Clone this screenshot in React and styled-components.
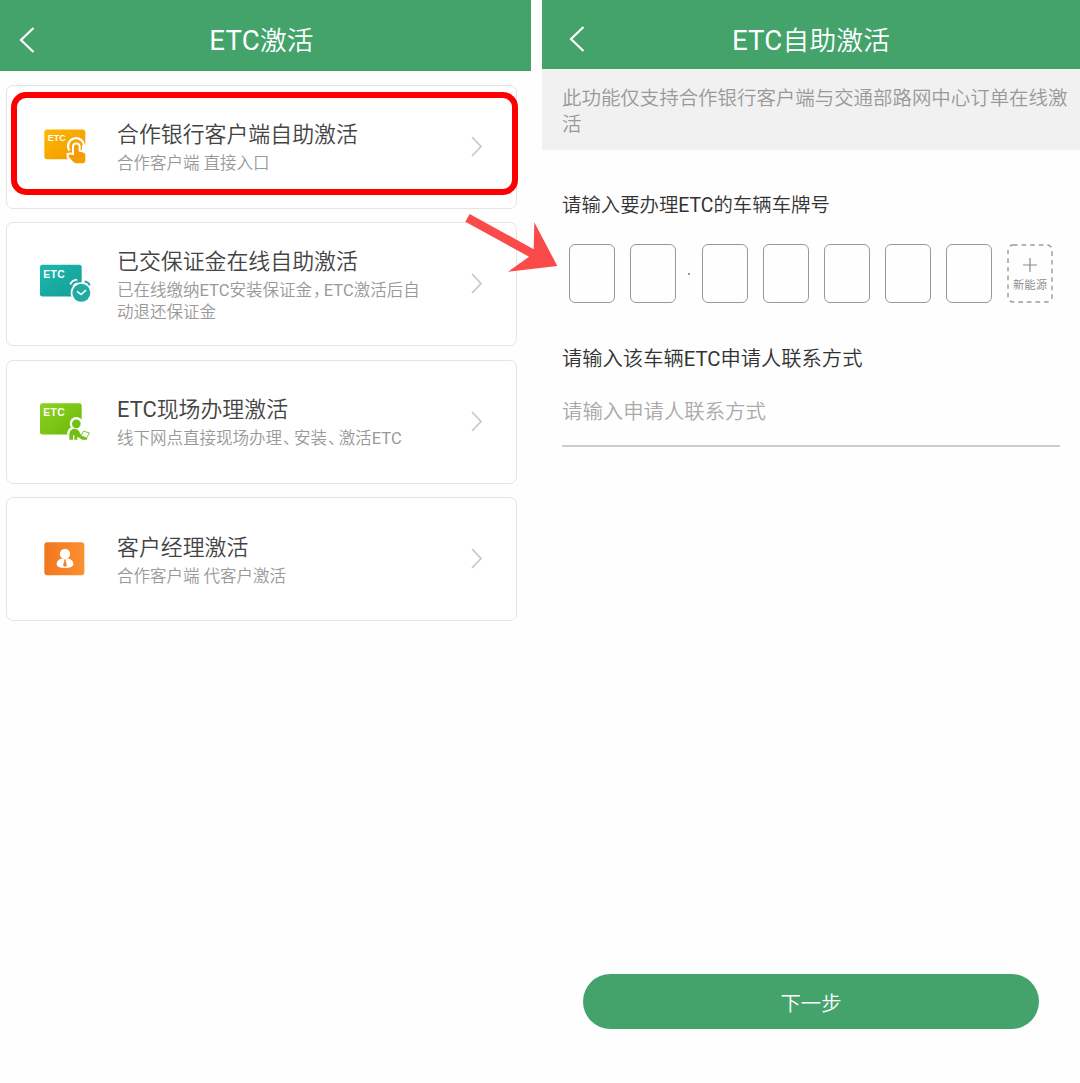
import React from 'react';
import styled, { createGlobalStyle } from 'styled-components';

const GlobalStyle = createGlobalStyle`
  * {
    box-sizing: border-box;
  }

  body {
    margin: 0;
    background: #fefefe;
    font-family: Roboto, 'Noto Sans CJK SC', sans-serif;
    font-weight: 350;
  }
`;

const Page = styled.main`
  position: relative;
  display: grid;
  grid-template-columns: 531px 538px;
  column-gap: 11px;
  width: 1080px;
  height: 1083px;
  overflow: hidden;
`;

const Screen = styled.section`
  display: flex;
  flex-direction: column;
`;

const Header = styled.header`
  display: grid;
  grid-template-columns: 60px 1fr 60px;
  align-items: center;
  height: ${props => props.$height}px;
  padding: 9px 26px 0 ${props => props.$inset}px;
  background: #43a36b;
  color: #fff;
`;

const BackButton = styled.button`
  display: flex;
  width: 20px;
  padding: 0;
  border: 0;
  background: none;
  color: #fff;
`;

const Title = styled.h1`
  margin: 3px 0 0;
  font-size: 26.7px;
  font-weight: 350;
  letter-spacing: 0.2px;
  line-height: 40px;
  text-align: center;
  white-space: nowrap;
`;

const Latin = styled.span`
  font-weight: 400;
`;

const TitleLatin = styled(Latin)`
  font-size: 27.6px;
`;

const CardList = styled.div`
  display: flex;
  flex-direction: column;
  gap: 13.6px;
  padding: 14px 14px 0 6px;
`;

const Card = styled.article`
  position: relative;
  display: flex;
  align-items: center;
  height: 124px;
  padding: 0 32px 0 28px;
  border: 1px solid #e4e4e4;
  border-radius: 7px;
  background: #fff;
`;

const CardText = styled.div`
  flex: 1;
  margin-left: 22px;
  padding-top: 2px;
`;

const CardTitle = styled.h2`
  margin: 0 0 3px;
  color: #444;
  font-size: 21.9px;
  font-weight: 350;
  line-height: 30px;
  white-space: nowrap;
`;

const CardNote = styled.p`
  margin: 0;
  color: #999;
  font-size: 16.5px;
  line-height: 21.5px;
  white-space: pre-line;
`;

// full-width punctuation set tighter than its em box
const Mark = styled.span`
  margin-left: 1px;
  letter-spacing: -5.6px;
`;

const Highlight = styled.div`
  position: absolute;
  top: 6px;
  right: -2px;
  left: 4px;
  height: 103px;
  border: 6px solid #fe0000;
  border-radius: 15px;
`;

const Arrow = styled.svg`
  position: absolute;
  top: 210px;
  left: 460px;
`;

const Notice = styled.p`
  height: 81px;
  margin: 0;
  padding: 17px 0 0 20px;
  background: #f1f1f1;
  color: #999;
  font-size: 19.45px;
  line-height: 26px;
`;

const Form = styled.form`
  display: flex;
  flex: 1;
  flex-direction: column;
  padding: 41px 20px 54px;
`;

const Label = styled.label`
  color: #333;
  font-size: ${props => props.$size}px;
  line-height: 30px;
  white-space: nowrap;
`;

const Plate = styled.div`
  display: flex;
  margin: 23px 0 41px 7px;
`;

const PlateGroup = styled.div`
  display: flex;
  gap: 15px;
`;

const PlateCell = styled.div`
  width: 46px;
  height: 59px;
  border: 1px solid #999;
  border-radius: 6px;
`;

const PlateDot = styled.span`
  display: flex;
  align-items: center;
  justify-content: center;
  width: 26px;

  &::after {
    width: 2px;
    height: 2px;
    background: #999;
    content: '';
  }
`;

const NewEnergy = styled.div`
  position: relative;
  display: flex;
  flex-direction: column;
  align-items: center;
  width: 46px;
  height: 59px;
  padding-top: 14px;
  color: #888;
  font-size: 11.3px;
  line-height: 16px;
  white-space: nowrap;

  > svg + span {
    margin-top: 6px;
  }
`;

const DashedFrame = styled.svg`
  position: absolute;
  top: 0;
  left: -0.5px;
`;

const Input = styled.input`
  height: 52px;
  margin-top: 21px;
  padding: 0 0 16px;
  border: 0;
  border-bottom: 2px solid #ccc;
  outline: 0;
  background: none;
  font-family: inherit;
  font-size: 20.4px;
  font-weight: 350;

  &::placeholder {
    color: #aaa;
    opacity: 1;
  }
`;

const NextButton = styled.button`
  height: 55px;
  margin: auto 21px 0 21px;
  border: 0;
  border-radius: 28px;
  background: #43a36b;
  color: #fff;
  font-family: inherit;
  font-size: 20.4px;
  font-weight: 350;
`;

const IconLabel = styled.text`
  fill: #fff;
  font-family: 'Liberation Sans', sans-serif;
  font-size: ${props => props.$size}px;
  font-weight: 700;
`;

const BackIcon = () => (
  <svg width="18" height="28" viewBox="0 0 18 28" fill="none">
    <path d="M15.5 2 3 14l12.5 12" stroke="currentColor" strokeWidth="2.2" />
  </svg>
);

const ChevronIcon = () => (
  <svg width="14" height="24" viewBox="0 0 14 24" fill="none">
    <path d="m2 2 9 9.5L2 21" stroke="#c8c8c8" strokeWidth="1.8" />
  </svg>
);

const TapIcon = () => (
  <svg width="60" height="50" viewBox="15 34.5 180 150">
    <defs>
      <linearGradient id="tap" x2="1" y2="1">
        <stop offset="0" stopColor="#fbb800" />
        <stop offset="1" stopColor="#f39800" />
      </linearGradient>
    </defs>
    <rect x="43" y="57" width="123" height="89" rx="9" fill="url(#tap)" />
    <IconLabel x="53" y="90" $size="27" textLength="54">ETC</IconLabel>
    <path d="M108 128h24v26h-12zM156 104h14v26h-14z" fill="#fff" />
    <path
      d="M118 120a24 24 0 1 1 41-1"
      fill="none"
      stroke="#fff"
      strokeWidth="7"
    />
    <path
      d="M132 134v-25q0-7 7-7t7 7v14l14 3q6 2 6 8v15q0 9-8 9h-20q-5 0-9-5l-13-14q-2-6 5-7z"
      fill="none"
      stroke="#fff"
      strokeWidth="12"
    />
    <path
      d="M132 134v-25q0-7 7-7t7 7v14l14 3q6 2 6 8v15q0 9-8 9h-20q-5 0-9-5l-13-14q-2-6 5-7z"
      fill="#f49c00"
    />
  </svg>
);

const ClockIcon = () => (
  <svg width="60" height="50" viewBox="15 27.6 180 150">
    <defs>
      <linearGradient id="clock" x2="1" y2="1">
        <stop offset="0" stopColor="#1ab8b2" />
        <stop offset="1" stopColor="#179d92" />
      </linearGradient>
    </defs>
    <rect x="30" y="45" width="125" height="95" rx="7" fill="url(#clock)" />
    <IconLabel x="40" y="84" $size="31" textLength="64">ETC</IconLabel>
    <path
      d="M126 106q4-10 16-11M164 95q12 1 15 12"
      fill="none"
      stroke="#fff"
      strokeWidth="17"
    />
    <circle cx="154" cy="129" r="32" fill="#fff" />
    <path
      d="M126 106q4-10 16-11M164 95q12 1 15 12"
      fill="none"
      stroke="#21aaa1"
      strokeWidth="6"
    />
    <circle cx="154" cy="129" r="27" fill="#21aaa1" />
    <path d="m141 125 12 9 15-13" fill="none" stroke="#fff" strokeWidth="4.5" />
  </svg>
);

const OnSiteIcon = () => (
  <svg width="60" height="50" viewBox="15 20.4 180 150">
    <defs>
      <linearGradient id="site" x2="1" y2="1">
        <stop offset="0" stopColor="#8ed21f" />
        <stop offset="1" stopColor="#68b90c" />
      </linearGradient>
    </defs>
    <rect x="30" y="39" width="125" height="94" rx="7" fill="url(#site)" />
    <IconLabel x="40" y="77" $size="31" textLength="64">ETC</IconLabel>
    <path d="M111 134q0-17 12-22a20 20 0 1 1 33-1v23z" fill="#fff" />
    <circle cx="139" cy="101" r="13" fill="#72bf12" />
    <path
      d="M118 149v-16q1-15 14-17 12 0 16 9l6 11 14 4q6 3 3 9h-14l-15-9v9z"
      fill="#72bf12"
    />
    <path d="M131 135v15" fill="none" stroke="#fff" strokeWidth="4" />
    <path
      d="m153 137 7-14 18 5-8 15z"
      fill="#fff"
      stroke="#86c83a"
      strokeWidth="3"
    />
  </svg>
);

const ManagerIcon = () => (
  <svg width="60" height="50" viewBox="15 13.2 180 150">
    <defs>
      <linearGradient id="manager" x1="0" x2="1">
        <stop offset="0" stopColor="#f1771f" />
        <stop offset="1" stopColor="#fb902f" />
      </linearGradient>
    </defs>
    <rect x="43" y="38" width="120" height="99" rx="9" fill="url(#manager)" />
    <circle cx="105" cy="73" r="15.5" fill="#fff" />
    <path
      d="M80 104q0-14 16-17h18q16 3 16 17 0 11-25 11t-25-11z"
      fill="#fff"
    />
    <path d="m102 90h6l-1 4 4 13-6 5-6-5 4-13z" fill="#f5822a" />
  </svg>
);

const PlusIcon = () => (
  <svg width="14" height="14" viewBox="0 0 14 14">
    <path d="M7 0v14M0 7h14" stroke="#888" strokeWidth="1.2" />
  </svg>
);

const options = [
  {
    id: 'bank',
    title: '合作银行客户端自助激活',
    note: '合作客户端 直接入口',
    Icon: TapIcon,
    highlighted: true
  },
  {
    id: 'deposit',
    title: '已交保证金在线自助激活',
    note: (
      <>
        已在线缴纳<Latin>ETC</Latin>安装保证金<Mark>，</Mark>
        <Latin>ETC</Latin>激活后自{'\n'}动退还保证金
      </>
    ),
    Icon: ClockIcon
  },
  {
    id: 'onsite',
    title: (
      <>
        <Latin>ETC</Latin>现场办理激活
      </>
    ),
    note: (
      <>
        线下网点直接现场办理<Mark>、</Mark>安装<Mark>、</Mark>激活
        <Latin>ETC</Latin>
      </>
    ),
    Icon: OnSiteIcon
  },
  {
    id: 'manager',
    title: '客户经理激活',
    note: '合作客户端 代客户激活',
    Icon: ManagerIcon
  }
];

const ActivationMenu = () => (
  <Screen>
    <Header $height={70.5} $inset={18}>
      <BackButton type="button" aria-label="返回">
        <BackIcon />
      </BackButton>
      <Title>
        <TitleLatin>ETC</TitleLatin>激活
      </Title>
    </Header>
    <CardList>
      {options.map(({ id, title, note, Icon, highlighted }) => (
        <Card key={id}>
          <Icon />
          <CardText>
            <CardTitle>{title}</CardTitle>
            <CardNote>{note}</CardNote>
          </CardText>
          <ChevronIcon />
          {highlighted && <Highlight />}
        </Card>
      ))}
    </CardList>
  </Screen>
);

const SelfActivation = () => (
  <Screen>
    <Header $height={69} $inset={26}>
      <BackButton type="button" aria-label="返回">
        <BackIcon />
      </BackButton>
      <Title>
        <TitleLatin>ETC</TitleLatin>自助激活
      </Title>
    </Header>
    <Notice>此功能仅支持合作银行客户端与交通部路网中心订单在线激活</Notice>
    <Form>
      <Label $size={19.4}>
        请输入要办理<Latin>ETC</Latin>的车辆车牌号
      </Label>
      <Plate>
        <PlateGroup>
          <PlateCell />
          <PlateCell />
        </PlateGroup>
        <PlateDot />
        <PlateGroup>
          {[0, 1, 2, 3, 4].map(cell => (
            <PlateCell key={cell} />
          ))}
          <NewEnergy>
            <DashedFrame width="46" height="59">
              <rect
                x="1"
                y="1"
                width="44"
                height="57"
                rx="5"
                fill="none"
                stroke="#999"
                strokeWidth="1.4"
                strokeDasharray="4.6 4"
              />
            </DashedFrame>
            <PlusIcon />
            <span>新能源</span>
          </NewEnergy>
        </PlateGroup>
      </Plate>
      <Label $size={20.3} htmlFor="contact">
        请输入该车辆<Latin>ETC</Latin>申请人联系方式
      </Label>
      <Input id="contact" placeholder="请输入申请人联系方式" />
      <NextButton type="button">下一步</NextButton>
    </Form>
  </Screen>
);

const App = () => (
  <>
    <GlobalStyle />
    <Page>
      <ActivationMenu />
      <SelfActivation />
      <Arrow width="100" height="66" viewBox="460 210 100 66">
        <path
          d="M469.7 214l64 35.3.6-27 23 43.7-49.3 5.7 21-15-63.7-35z"
          fill="#fb4a4a"
        />
      </Arrow>
    </Page>
  </>
);

export default App;
